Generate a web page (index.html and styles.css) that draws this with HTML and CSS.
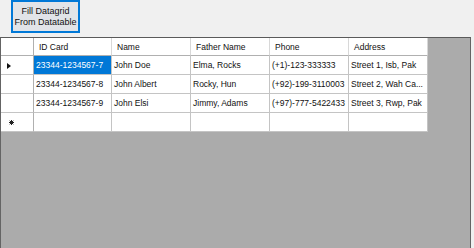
FILE: index.html
```html
<!DOCTYPE html>
<html>
<head>
<meta charset="utf-8">
<link rel="stylesheet" href="styles.css">
</head>
<body>
<div class="toolbar">
  <button class="fill-btn">Fill Datagrid<br>From Datatable</button>
</div>
<div class="grid">
  <div class="rows">
    <div class="row head">
      <div class="cell rh"></div>
      <div class="cell hc">ID Card</div>
      <div class="cell hc">Name</div>
      <div class="cell hc">Father Name</div>
      <div class="cell hc">Phone</div>
      <div class="cell hc">Address</div>
    </div>
    <div class="row">
      <div class="cell rh"><span class="arrow"></span></div>
      <div class="cell sel">23344-1234567-7</div>
      <div class="cell">John Doe</div>
      <div class="cell">Elma, Rocks</div>
      <div class="cell">(+1)-123-333333</div>
      <div class="cell">Street 1, Isb, Pak</div>
    </div>
    <div class="row">
      <div class="cell rh"></div>
      <div class="cell">23344-1234567-8</div>
      <div class="cell">John Albert</div>
      <div class="cell">Rocky, Hun</div>
      <div class="cell">(+92)-199-3110003</div>
      <div class="cell">Street 2, Wah Ca...</div>
    </div>
    <div class="row">
      <div class="cell rh"></div>
      <div class="cell">23344-1234567-9</div>
      <div class="cell">John Elsi</div>
      <div class="cell">Jimmy, Adams</div>
      <div class="cell">(+97)-777-5422433</div>
      <div class="cell">Street 3, Rwp, Pak</div>
    </div>
    <div class="row">
      <div class="cell rh"><svg class="star" width="5" height="5" viewBox="0 0 5 5"><path d="M2.5 0V5M0 2.5H5M0.7 0.7L4.3 4.3M4.3 0.7L0.7 4.3" stroke="#222" stroke-width="1"/></svg></div>
      <div class="cell"></div>
      <div class="cell"></div>
      <div class="cell"></div>
      <div class="cell"></div>
      <div class="cell"></div>
    </div>
  </div>
</div>
</body>
</html>
```
FILE: styles.css
```css
html, body {
  margin: 0;
  padding: 0;
  background: #f0f0f0;
  width: 474px;
  height: 248px;
  overflow: hidden;
  font-family: "Liberation Sans", Arial, sans-serif;
}
.toolbar {
  height: 37px;
  padding-left: 11px;
  box-sizing: border-box;
}
.fill-btn {
  display: block;
  width: 69px;
  height: 33px;
  margin: 0;
  padding: 0;
  border: 1px solid #0078d7;
  box-shadow: inset 0 0 0 1px #0078d7;
  background: #e1e4e8;
  font-family: "Liberation Sans", Arial, sans-serif;
  font-size: 9px;
  line-height: 11px;
  color: #111;
  text-align: center;
}
.grid {
  width: 471px;
  height: 211px;
  box-sizing: border-box;
  border-top: 1px solid #5a5a5a;
  border-left: 1px solid #646464;
  border-right: 1px solid #646464;
  background: #ababab;
}
.rows {
  width: 427px;
  background: #fff;
}
.row {
  display: grid;
  grid-template-columns: 33px 78px 79px 79px 79px 79px;
  height: 19px;
}
.row.head {
  height: 18px;
}
.cell {
  box-sizing: border-box;
  border-right: 1px solid #c4c4c4;
  border-bottom: 1px solid #c4c4c4;
  font-size: 8.5px;
  color: #111;
  padding-left: 2px;
  display: flex;
  align-items: center;
  white-space: nowrap;
  overflow: hidden;
}
.row .cell:first-child {
  border-right-color: #b0b0b0;
}
.head .cell {
  border-bottom-color: #b0b0b0;
  border-right-color: #d8d8d8;
}
.hc {
  padding-left: 5px;
  padding-top: 1px;
}
.rh {
  padding-left: 6px;
}
.sel {
  background: #0078d7;
  color: #fff;
}
.arrow {
  width: 0;
  height: 0;
  border-top: 3px solid transparent;
  border-bottom: 3px solid transparent;
  border-left: 4px solid #111;
  margin-top: 1px;
}
.star {
  display: block;
  margin-left: 2px;
  margin-top: 1px;
}
```
